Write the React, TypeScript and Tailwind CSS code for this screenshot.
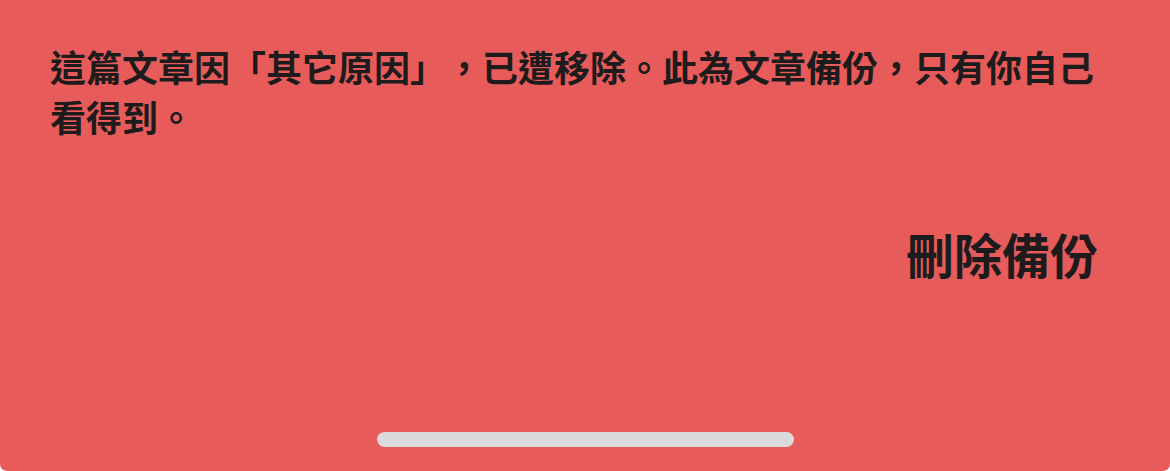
import React from 'react';

const App: React.FC = () => {
  return (
    <div className="w-[1170px] h-[471px] bg-white">
      <div
        className="h-full flex flex-col bg-[#e85b5b] rounded-b-[7px] px-[50px] pt-[41px] text-[#1d1b1c] [text-spacing-trim:space-all]"
        style={{ fontFamily: '"Noto Sans CJK TC", "Noto Sans", sans-serif' }}
      >
        {/* Message */}
        <p className="text-[36px] leading-[50px] font-semibold pr-[20px]">
          這篇文章因「其它原因」，已遭移除。此為文章備份，只有你自己看得到。
        </p>

        {/* Action */}
        <div className="mt-[88px] flex justify-end pr-[22px]">
          <button className="text-[48px] leading-[48px] font-semibold">刪除備份</button>
        </div>

        {/* Home indicator */}
        <div className="mt-auto mb-[24px] flex justify-center">
          <div className="w-[417px] h-[15px] rounded-full bg-[#dbdbdb]" />
        </div>
      </div>
    </div>
  );
};

export default App;
